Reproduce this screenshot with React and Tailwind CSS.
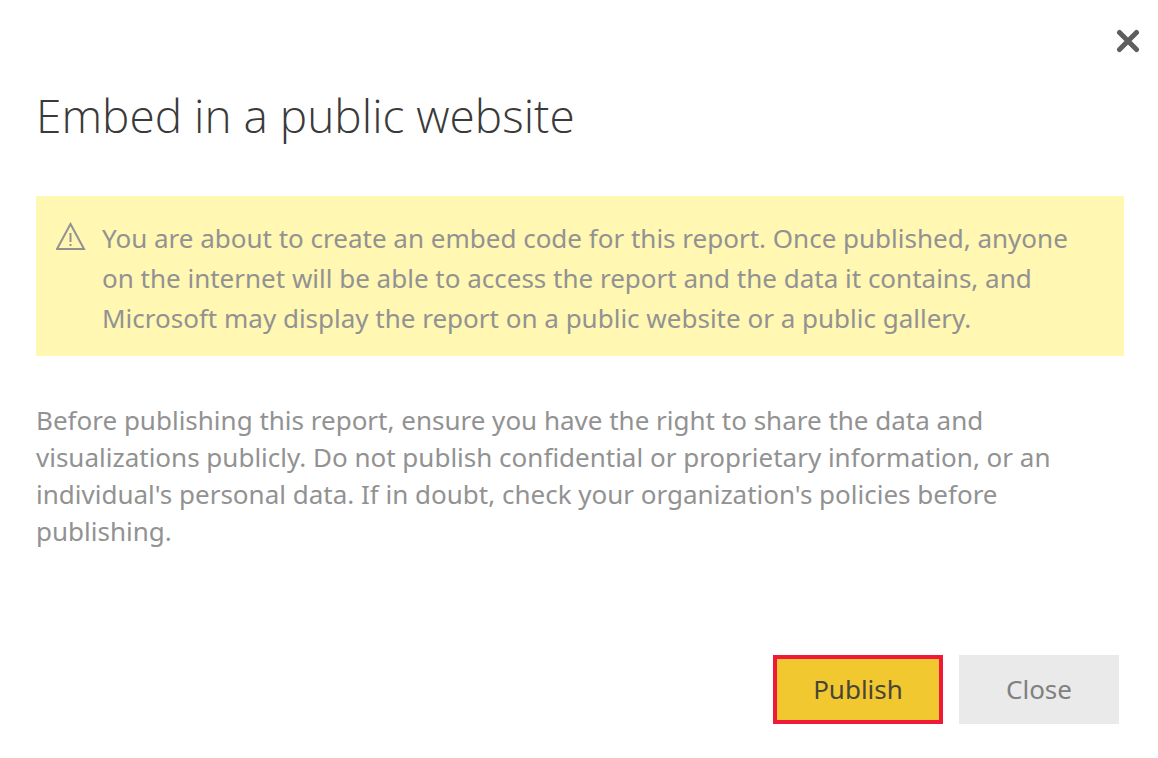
import React from "react";

export default function App() {
  return (
    <main
      role="dialog"
      aria-labelledby="dialog-title"
      className="min-h-screen bg-white pr-[34px] pb-8 pl-9 font-['Noto_Sans','Open_Sans',sans-serif] text-[#929292]"
    >
      <div className="-mr-[18px] flex justify-end pt-[27px]">
        <button type="button" aria-label="Close dialog" className="p-0.5 text-[#5e5e5e]">
          <svg width="24" height="24" viewBox="0 0 24 24" fill="none" stroke="currentColor" strokeWidth="5" strokeLinecap="round">
            <path d="M3.5 3.5 20.5 20.5M20.5 3.5 3.5 20.5" />
          </svg>
        </button>
      </div>
      <h1 id="dialog-title" className="mt-[30px] font-['Open_Sans','Noto_Sans',sans-serif] text-[46px] leading-[60px] font-light text-[#3a3a3a]">
        Embed in a public website
      </h1>
      <section className="mt-[51px] flex gap-4 bg-[#fff7b2] pt-[22px] pr-6 pb-[18px] pl-5">
        <svg className="mt-1 shrink-0" width="30" height="30" viewBox="0 0 30 30" fill="none" stroke="currentColor" strokeWidth="2">
          <path d="M14.5 2 28 27H1Z" />
          <path d="M14.5 11v9M14.5 22v2" />
        </svg>
        <p className="text-[26px] leading-10">
          You are about to create an embed code for this report. Once published, anyone on the internet will be able to
          access the report and the data it contains, and Microsoft may display the report on a public website or a
          public gallery.
        </p>
      </section>
      <p className="mt-[46px] text-[26px] leading-[37px]">
        Before publishing this report, ensure you have the right to share the data and visualizations publicly. Do not
        publish confidential or proprietary information, or an individual's personal data. If in doubt, check your
        organization's policies before publishing.
      </p>
      <div className="mt-[105px] mr-[5px] flex justify-end gap-4 text-[26px]">
        <button type="button" className="h-[69px] w-[170px] border-4 border-[#f01a38] bg-[#f2c831] text-[#4a4636]">
          Publish
        </button>
        <button type="button" className="h-[69px] w-40 bg-[#eaeaea] text-[#808080]">
          Close
        </button>
      </div>
    </main>
  );
}
